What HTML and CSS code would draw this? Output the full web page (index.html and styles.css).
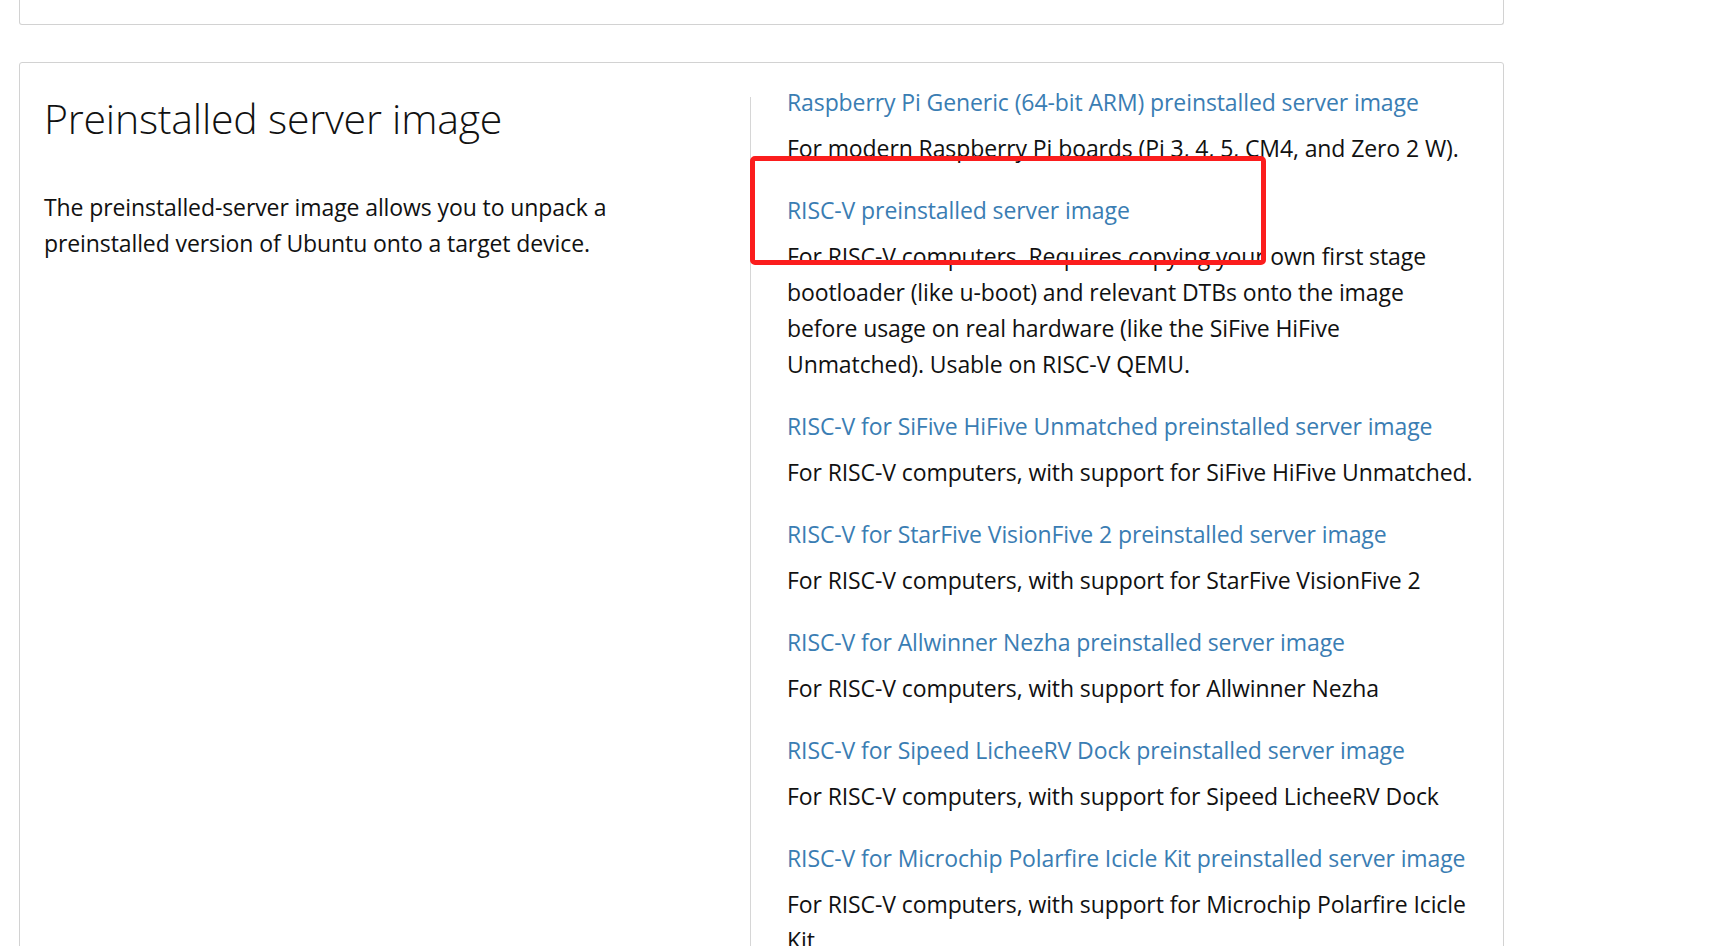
FILE: index.html
```html
<!DOCTYPE html>
<html lang="en">
<head>
  <meta charset="UTF-8" />
  <meta name="viewport" content="width=device-width, initial-scale=1.0"/>
  <title>Preinstalled server image</title>
  <link rel="stylesheet" href="styles.css">
</head>
<body>
  <div class="page">
    <div class="card card-prev"></div>

    <section class="card">
      <div class="col-intro">
        <h2>Preinstalled server image</h2>
        <p>The preinstalled-server image allows you to unpack a<br>preinstalled version of Ubuntu onto a target device.</p>
      </div>

      <ul class="images">
        <li>
          <a href="#">Raspberry Pi Generic (64-bit ARM) preinstalled server image</a>
          <p>For modern Raspberry Pi boards (Pi 3, 4, 5, CM4, and Zero 2 W).</p>
        </li>
        <li class="marked">
          <a href="#">RISC-V preinstalled server image</a>
          <p>For RISC-V computers. Requires copying your own first stage<br>bootloader (like u-boot) and relevant DTBs onto the image<br>before usage on real hardware (like the SiFive HiFive<br>Unmatched). Usable on RISC-V QEMU.</p>
          <span class="highlight"></span>
        </li>
        <li>
          <a href="#">RISC-V for SiFive HiFive Unmatched preinstalled server image</a>
          <p>For RISC-V computers, with support for SiFive HiFive Unmatched.</p>
        </li>
        <li>
          <a href="#">RISC-V for StarFive VisionFive 2 preinstalled server image</a>
          <p>For RISC-V computers, with support for StarFive VisionFive 2</p>
        </li>
        <li>
          <a href="#">RISC-V for Allwinner Nezha preinstalled server image</a>
          <p>For RISC-V computers, with support for Allwinner Nezha</p>
        </li>
        <li>
          <a href="#">RISC-V for Sipeed LicheeRV Dock preinstalled server image</a>
          <p>For RISC-V computers, with support for Sipeed LicheeRV Dock</p>
        </li>
        <li>
          <a href="#">RISC-V for Microchip Polarfire Icicle Kit preinstalled server image</a>
          <p>For RISC-V computers, with support for Microchip Polarfire Icicle<br>Kit</p>
        </li>
      </ul>
    </section>
  </div>
</body>
</html>
```

FILE: styles.css
```css
* {
  box-sizing: border-box;
}
html, body {
  height: 100%;
}
body {
  margin: 0;
  background: #fff;
  color: #111;
  font-family: "Open Sans", "Noto Sans", sans-serif;
  font-size: 23px;
  line-height: 36px;
  overflow: hidden;
}
.page {
  width: 1485px;
  margin-left: 19px;
}
.card {
  border: 1px solid #d2d2d2;
  border-radius: 3px;
  background: #fff;
}
.card-prev {
  height: 25px;
  border-top: 0;
  border-radius: 0 0 3px 3px;
  margin-bottom: 37px;
}
section.card {
  display: grid;
  grid-template-columns: 706px 1fr;
  padding: 34px 8px 0 24px;
  height: 1000px;
}
.col-intro h2 {
  margin: -4px 0 0;
  font-size: 41px;
  line-height: 50px;
  font-weight: 300;
  letter-spacing: -0.2px;
}
.col-intro p {
  margin: 46px 0 0;
  letter-spacing: -0.1px;
}
.images {
  list-style: none;
  margin: 0;
  padding: 0 0 0 36px;
  border-left: 1px solid #d6d6d6;
}
.images li {
  position: relative;
  margin-bottom: 26px;
  white-space: nowrap;
}
.images li:first-child {
  margin-top: -13px;
}
.images a {
  display: block;
  color: #3a7db3;
  text-decoration: none;
  letter-spacing: -0.1px;
}
.images p {
  margin: 10px 0 0;
  letter-spacing: -0.1px;
}
.highlight {
  position: absolute;
  top: -36px;
  left: -37px;
  width: 516px;
  height: 109px;
  border: 5px solid #fb1d1d;
  border-radius: 5px;
}
```
